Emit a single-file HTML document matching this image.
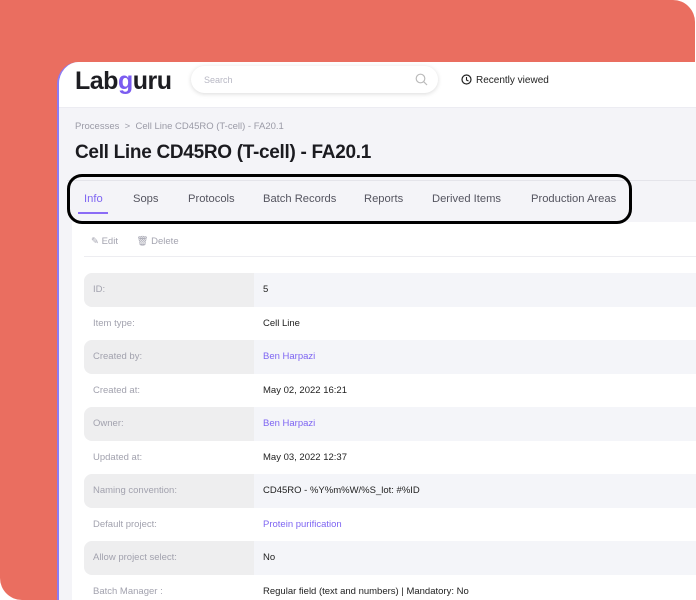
<!DOCTYPE html>
<html><head><style>
*{margin:0;padding:0;box-sizing:border-box}
body{width:696px;height:600px;overflow:hidden;background:#fff;font-family:"Liberation Sans",sans-serif;position:relative}
.coral{position:absolute;left:0;top:0;width:695px;height:600px;background:#EA6E60;border-radius:0 22px 0 22px}
.win{position:absolute;left:57px;top:62px;width:639px;height:538px;background:#F4F4F8;border-radius:22px 0 0 0;overflow:hidden;border-left:2px solid #8B7BF5}
.hdr{position:absolute;left:0;top:0;right:0;height:46px;background:#fff;border-bottom:1px solid #ececf2}
.logo{position:absolute;left:16px;top:5px;font-size:25px;font-weight:bold;color:#1d1d22;letter-spacing:-0.5px}
.logo .g{color:#7B5CF0}
.search{position:absolute;left:132px;top:4px;width:247px;height:27px;border-radius:14px;background:#fff;box-shadow:0 1px 5px rgba(0,0,0,.15);font-size:9px;color:#b8b8c4;padding:9px 13px}
.rv{position:absolute;left:402px;top:12px;font-size:10px;color:#222}
.crumb{position:absolute;left:16px;top:59px;font-size:9.5px;color:#9a9aa6}
h1{position:absolute;left:16px;top:80px;font-size:19px;font-weight:bold;color:#1b1b20;letter-spacing:-0.3px}
.tabline{position:absolute;left:8px;top:118px;right:0;height:1px;background:#e4e4ea}
.oval{position:absolute;left:8px;top:112px;width:565px;height:50px;border:3px solid #000;border-radius:15px}
.tabs{position:absolute;left:25px;top:131px;font-size:11.2px;color:#555560}
.tabs span{position:absolute;white-space:nowrap}
.ul{position:absolute;left:19px;top:150px;width:30px;height:2px;background:#8B6CF6}
.card{position:absolute;left:13px;top:160px;right:0;bottom:0;background:#fff}
.act{position:absolute;left:19px;top:14px;font-size:9.5px;color:#a4a4b0}
.sep{position:absolute;left:12px;top:34px;right:0;height:1px;background:#ededf1}
.row{position:absolute;left:12px;right:0;height:33.5px;font-size:9.5px}
.row .l{position:absolute;left:0;top:0;width:170px;height:100%;padding:11px 9px;color:#a2a2ae;border-radius:8px 0 0 8px}
.row .v{position:absolute;left:170px;right:0;top:0;height:100%;padding:11px 9px;color:#222}
.row.s .l{background:#EEEEEF}.row.s .v{background:#F4F5F9}
.p{color:#7E65F2!important}
</style></head><body>
<div class="coral"></div>
<div class="win">
 <div class="hdr">
  <div class="logo">Lab<span class="g">g</span>uru</div>
  <div class="search">Search<svg style="position:absolute;right:10px;top:7px" width="13" height="13" viewBox="0 0 13 13"><circle cx="5.5" cy="5.5" r="4.3" fill="none" stroke="#bbb" stroke-width="1.2"/><path d="M8.7 8.7L12 12" stroke="#bbb" stroke-width="1.2"/></svg></div>
  <div class="rv"><svg style="vertical-align:-2px;margin-right:4px" width="11" height="11" viewBox="0 0 11 11"><circle cx="5.5" cy="5.5" r="4.5" fill="none" stroke="#222" stroke-width="1.2"/><path d="M5.5 3v3l2 1" stroke="#222" fill="none" stroke-width="1.1"/></svg>Recently viewed</div>
 </div>
 <div class="crumb">Processes &nbsp;&gt;&nbsp; Cell Line CD45RO (T-cell) - FA20.1</div>
 <h1>Cell Line CD45RO (T-cell) - FA20.1</h1>
 <div class="tabline"></div>
 <div class="tabs">
  <span style="left:0px;color:#7E65F2">Info</span>
  <span style="left:49px">Sops</span>
  <span style="left:104px">Protocols</span>
  <span style="left:179px">Batch Records</span>
  <span style="left:280px">Reports</span>
  <span style="left:348px">Derived Items</span>
  <span style="left:447px">Production Areas</span>
 </div>
 <div class="ul"></div>
 <div class="card">
  <div class="act">✎ Edit &nbsp;&nbsp;&nbsp;&nbsp;&nbsp; 🗑 Delete</div>
  <div class="sep"></div>
  <div class="row s" style="top:51px"><div class="l">ID:</div><div class="v">5</div></div>
  <div class="row" style="top:84.5px"><div class="l">Item type:</div><div class="v">Cell Line</div></div>
  <div class="row s" style="top:118px"><div class="l">Created by:</div><div class="v p">Ben Harpazi</div></div>
  <div class="row" style="top:151.5px"><div class="l">Created at:</div><div class="v">May 02, 2022 16:21</div></div>
  <div class="row s" style="top:185px"><div class="l">Owner:</div><div class="v p">Ben Harpazi</div></div>
  <div class="row" style="top:218.5px"><div class="l">Updated at:</div><div class="v">May 03, 2022 12:37</div></div>
  <div class="row s" style="top:252px"><div class="l">Naming convention:</div><div class="v">CD45RO - %Y%m%W/%S_lot: #%ID</div></div>
  <div class="row" style="top:285.5px"><div class="l">Default project:</div><div class="v p">Protein purification</div></div>
  <div class="row s" style="top:319px"><div class="l">Allow project select:</div><div class="v">No</div></div>
  <div class="row" style="top:352.5px"><div class="l">Batch Manager :</div><div class="v">Regular field (text and numbers) | Mandatory: No</div></div>
 </div>
 <div class="oval"></div>
</div>
</body></html>
